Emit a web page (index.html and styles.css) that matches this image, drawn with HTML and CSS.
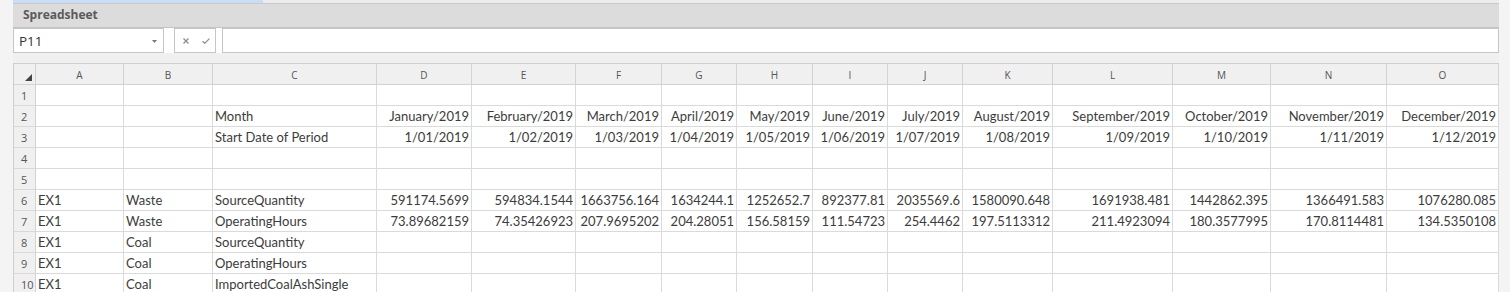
FILE: index.html
```html
<!DOCTYPE html>
<html>
<head>
<meta charset="utf-8">
<link rel="stylesheet" href="styles.css">
</head>
<body>
<div class="panel">
  <div class="tabline"><div class="tab-active"></div></div>
  <div class="titlebar">Spreadsheet</div>
  <div class="formulabar">
    <div class="namebox"><span class="cellref">P11</span><svg class="dd" width="5" height="3" viewBox="0 0 5 3"><polygon points="0,0 5,0 2.5,3" fill="#7a7a7a"/></svg></div>
    <div class="btnbox">
      <svg width="6" height="6" viewBox="0 0 6 6"><path d="M0.5 0.5 L5.5 5.5 M5.5 0.5 L0.5 5.5" stroke="#8a8a8a" stroke-width="1.2"/></svg>
      <svg width="8" height="6" viewBox="0 0 8 6"><path d="M0.6 3.2 L2.8 5.3 L7.4 0.6" stroke="#8a8a8a" stroke-width="1.2" fill="none"/></svg>
    </div>
    <div class="fxinput"></div>
  </div>
  <div class="gap"></div>
  <div class="grid">
    <div class="hd corner"><svg width="7" height="7" viewBox="0 0 7 7"><polygon points="7,0 7,7 0,7" fill="#444"/></svg></div>
    <div class="hd">A</div><div class="hd">B</div><div class="hd">C</div><div class="hd">D</div><div class="hd">E</div><div class="hd">F</div><div class="hd">G</div><div class="hd">H</div><div class="hd">I</div><div class="hd">J</div><div class="hd">K</div><div class="hd">L</div><div class="hd">M</div><div class="hd">N</div><div class="hd">O</div>

    <div class="rh">1</div><div class="c"></div><div class="c"></div><div class="c"></div><div class="c"></div><div class="c"></div><div class="c"></div><div class="c"></div><div class="c"></div><div class="c"></div><div class="c"></div><div class="c"></div><div class="c"></div><div class="c"></div><div class="c"></div><div class="c"></div>

    <div class="rh">2</div><div class="c"></div><div class="c"></div><div class="c">Month</div><div class="c r">January/2019</div><div class="c r">February/2019</div><div class="c r">March/2019</div><div class="c r">April/2019</div><div class="c r">May/2019</div><div class="c r">June/2019</div><div class="c r">July/2019</div><div class="c r">August/2019</div><div class="c r">September/2019</div><div class="c r">October/2019</div><div class="c r">November/2019</div><div class="c r">December/2019</div>

    <div class="rh">3</div><div class="c"></div><div class="c"></div><div class="c">Start Date of Period</div><div class="c r">1/01/2019</div><div class="c r">1/02/2019</div><div class="c r">1/03/2019</div><div class="c r">1/04/2019</div><div class="c r">1/05/2019</div><div class="c r">1/06/2019</div><div class="c r">1/07/2019</div><div class="c r">1/08/2019</div><div class="c r">1/09/2019</div><div class="c r">1/10/2019</div><div class="c r">1/11/2019</div><div class="c r">1/12/2019</div>

    <div class="rh">4</div><div class="c"></div><div class="c"></div><div class="c"></div><div class="c"></div><div class="c"></div><div class="c"></div><div class="c"></div><div class="c"></div><div class="c"></div><div class="c"></div><div class="c"></div><div class="c"></div><div class="c"></div><div class="c"></div><div class="c"></div>

    <div class="rh">5</div><div class="c"></div><div class="c"></div><div class="c"></div><div class="c"></div><div class="c"></div><div class="c"></div><div class="c"></div><div class="c"></div><div class="c"></div><div class="c"></div><div class="c"></div><div class="c"></div><div class="c"></div><div class="c"></div><div class="c"></div>

    <div class="rh">6</div><div class="c">EX1</div><div class="c">Waste</div><div class="c">SourceQuantity</div><div class="c r">591174.5699</div><div class="c r">594834.1544</div><div class="c r">1663756.164</div><div class="c r">1634244.1</div><div class="c r">1252652.7</div><div class="c r">892377.81</div><div class="c r">2035569.6</div><div class="c r">1580090.648</div><div class="c r">1691938.481</div><div class="c r">1442862.395</div><div class="c r">1366491.583</div><div class="c r">1076280.085</div>

    <div class="rh">7</div><div class="c">EX1</div><div class="c">Waste</div><div class="c">OperatingHours</div><div class="c r">73.89682159</div><div class="c r">74.35426923</div><div class="c r">207.9695202</div><div class="c r">204.28051</div><div class="c r">156.58159</div><div class="c r">111.54723</div><div class="c r">254.4462</div><div class="c r">197.5113312</div><div class="c r">211.4923094</div><div class="c r">180.3577995</div><div class="c r">170.8114481</div><div class="c r">134.5350108</div>

    <div class="rh">8</div><div class="c">EX1</div><div class="c">Coal</div><div class="c">SourceQuantity</div><div class="c"></div><div class="c"></div><div class="c"></div><div class="c"></div><div class="c"></div><div class="c"></div><div class="c"></div><div class="c"></div><div class="c"></div><div class="c"></div><div class="c"></div><div class="c"></div>

    <div class="rh">9</div><div class="c">EX1</div><div class="c">Coal</div><div class="c">OperatingHours</div><div class="c"></div><div class="c"></div><div class="c"></div><div class="c"></div><div class="c"></div><div class="c"></div><div class="c"></div><div class="c"></div><div class="c"></div><div class="c"></div><div class="c"></div><div class="c"></div>

    <div class="rh">10</div><div class="c">EX1</div><div class="c">Coal</div><div class="c">ImportedCoalAshSingle</div><div class="c"></div><div class="c"></div><div class="c"></div><div class="c"></div><div class="c"></div><div class="c"></div><div class="c"></div><div class="c"></div><div class="c"></div><div class="c"></div><div class="c"></div><div class="c"></div>
  </div>
</div>
</body>
</html>
```

FILE: styles.css
```css
html, body {
  margin: 0;
  padding: 0;
  background: #f4f4f4;
  overflow: hidden;
}

.panel {
  margin-left: 13px;
  width: 1486px;
  font-family: "Open Sans", "Liberation Sans", sans-serif;
}

.tabline {
  height: 3px;
  background: #ececec;
  border-bottom: 1px solid #c9c9c9;
}

.tab-active {
  width: 250px;
  height: 3px;
  background: #c9def6;
}

.titlebar {
  height: 23px;
  line-height: 22px;
  background: #dcdcdc;
  border-bottom: 1px solid #c4c4c4;
  padding-left: 10px;
  font-size: 12px;
  font-weight: 700;
  color: #5a5a5a;
}

.formulabar {
  display: flex;
  height: 25px;
  background: #ffffff;
}

.namebox {
  box-sizing: border-box;
  width: 151px;
  height: 25px;
  border: 1px solid #c6c6c6;
  display: flex;
  align-items: center;
  justify-content: space-between;
  padding: 0 6px 0 5px;
}

.cellref {
  font-size: 13.5px;
  color: #333;
  line-height: 22px;
}

.dd {
  display: block;
  margin-top: 1px;
}

.btnbox {
  box-sizing: border-box;
  width: 42px;
  height: 25px;
  margin-left: 10px;
  border: 1px solid #c6c6c6;
  display: flex;
  align-items: center;
  padding-left: 8px;
  gap: 13px;
}

.btnbox svg {
  display: block;
}

.fxinput {
  box-sizing: border-box;
  flex: 1;
  height: 25px;
  margin-left: 6px;
  border: 1px solid #c6c6c6;
}

.gap {
  height: 10px;
  background: #f0f0f0;
}

.grid {
  display: grid;
  grid-template-columns: 22px 88px 89px 164px 95px 104px 86px 75px 76px 75px 75px 90px 120px 98px 116px 112px;
  grid-auto-rows: 21px;
  border-left: 1px solid #cfcfcf;
  border-top: 1px solid #cfcfcf;
  background: #ffffff;
}

.hd {
  box-sizing: border-box;
  background: #f0f0f0;
  border-right: 1px solid #d3d3d3;
  border-bottom: 1px solid #d3d3d3;
  font-size: 10px;
  color: #555;
  text-align: center;
  line-height: 22px;
}

.corner {
  display: flex;
  justify-content: flex-end;
  align-items: flex-end;
  padding: 0 3px 3px 0;
}

.corner svg {
  display: block;
}

.rh {
  box-sizing: border-box;
  background: #f0f0f0;
  border-right: 1px solid #d3d3d3;
  border-bottom: 1px solid #d9d9d9;
  font-size: 11px;
  color: #555;
  padding-left: 7px;
  line-height: 21px;
}

.c {
  box-sizing: border-box;
  border-right: 1px solid #dadada;
  border-bottom: 1px solid #dadada;
  font-family: "Lato", "Open Sans", sans-serif;
  font-size: 13px;
  color: #3c3c3c;
  line-height: 21px;
  padding: 0 2px;
  white-space: nowrap;
  overflow: hidden;
}

.r {
  text-align: right;
}
```
